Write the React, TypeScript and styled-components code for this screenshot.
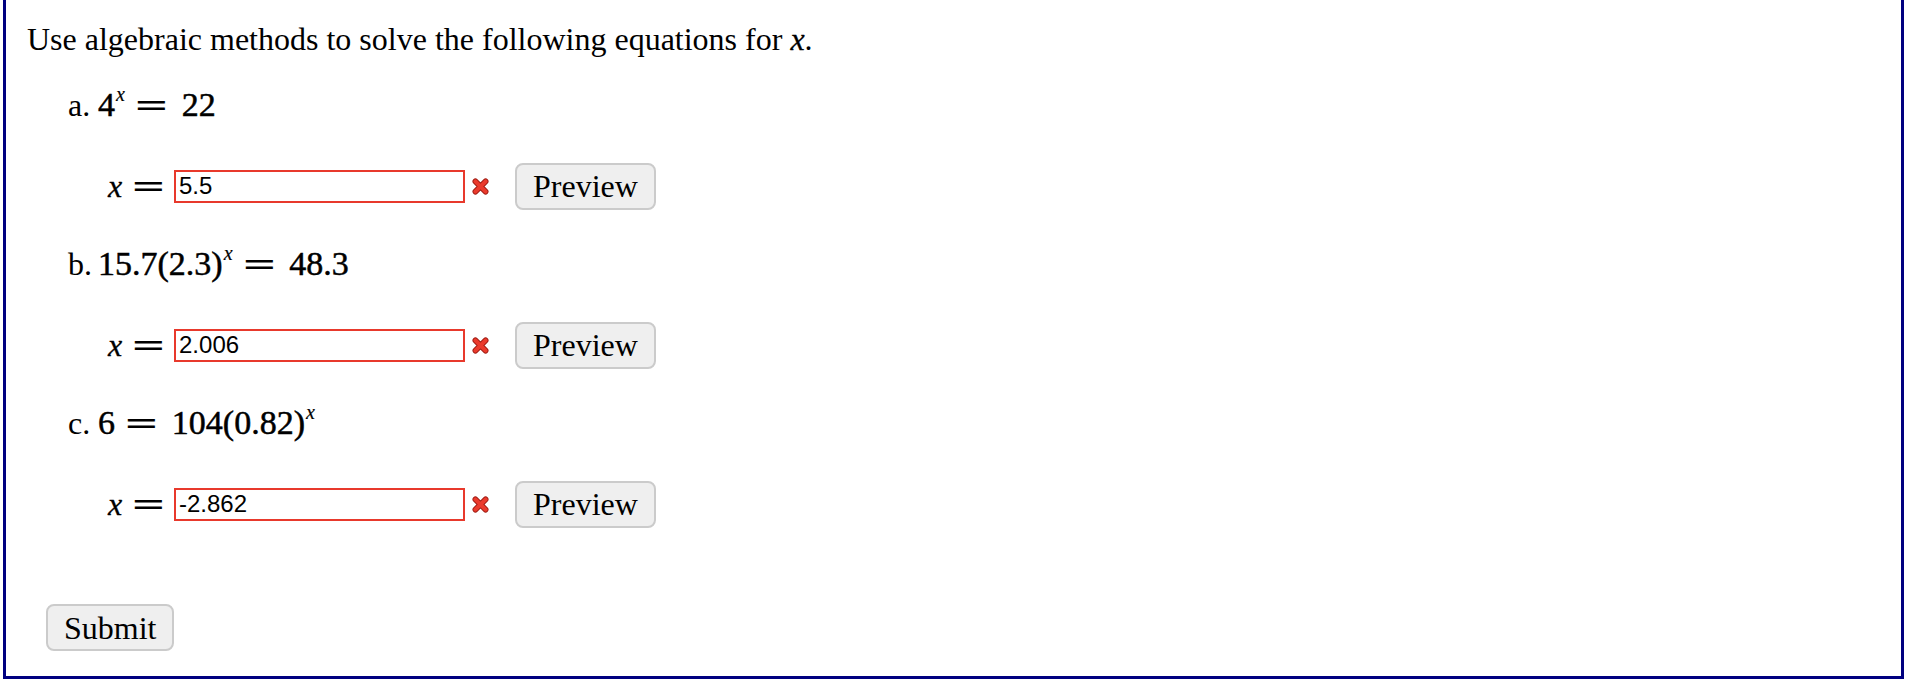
import React from "react";
import styled, { createGlobalStyle } from "styled-components";

const GlobalStyle = createGlobalStyle`
  html, body {
    margin: 0;
    padding: 0;
    background: #fff;
  }
  body {
    font-family: "Liberation Serif", "Times New Roman", serif;
    color: #000;
  }
`;

const problems = [
  { label: "a.", answer: "5.5", kind: "a" },
  { label: "b.", answer: "2.006", kind: "b" },
  { label: "c.", answer: "-2.862", kind: "c" },
];

const Frame = styled.div`
  margin: 0 2px 0 3px;
  height: 679px;
  box-sizing: border-box;
  border: 3px solid #000080;
  border-top: none;
  padding: 20px 0 0 21px;
  display: flex;
  flex-direction: column;
`;

const Intro = styled.p`
  margin: 0;
  font-size: 32px;
  line-height: 38px;
  height: 38px;
`;

const List = styled.div`
  margin-top: 27px;
  display: flex;
  flex-direction: column;
  gap: 34px;
`;

const Item = styled.div`
  display: flex;
  flex-direction: column;
  gap: 37px;
`;

const Title = styled.div`
  display: flex;
  align-items: baseline;
  height: 40px;
  line-height: 40px;
  padding-left: 41px;
  font-size: 32px;
  white-space: nowrap;
`;

const Label = styled.span`
  flex: none;
  width: 22px;
  margin-right: 8px;
`;

const Math = styled.span`
  font-family: "Liberation Serif", "Times New Roman", serif;
  font-size: 34px;
  -webkit-text-stroke: 0.5px #000;
`;

const Var = styled.i`
  font-family: "Liberation Serif", "Times New Roman", serif;
  font-style: italic;
  font-size: 32px;
  -webkit-text-stroke: 0.3px #000;
`;

const Sup = styled.sup`
  font-family: "Liberation Serif", "Times New Roman", serif;
  font-style: italic;
  font-size: 20px;
  vertical-align: 15px;
  line-height: 0;
  margin-left: 1px;
  -webkit-text-stroke: 0.2px #000;
`;

const Eq = styled.span<{ $l?: number; $r?: number }>`
  display: inline-block;
  font-family: "DejaVu Serif", serif;
  font-size: 32px;
  -webkit-text-stroke: 0;
  transform: scaleX(1.35);
  margin: 0 ${(p) => p.$r ?? 17}px 0 ${(p) => p.$l ?? 13}px;
`;

const Row = styled.div`
  display: flex;
  align-items: center;
  height: 48px;
  padding-left: 81px;
`;

const AnswerBox = styled.input`
  box-sizing: border-box;
  width: 291px;
  height: 33px;
  margin: 0;
  border: 2px solid #e8392c;
  padding: 0 3px;
  font-family: "Liberation Sans", Arial, sans-serif;
  font-size: 24px;
  color: #000;
  background: #fff;
  outline: none;
`;

const Mark = styled.svg`
  width: 17px;
  height: 17px;
  margin-left: 7px;
  flex: none;
`;

const Button = styled.button<{ $ml?: number }>`
  box-sizing: border-box;
  height: 47px;
  margin: 0 0 0 ${(p) => p.$ml ?? 0}px;
  padding: 0 16px;
  font-family: "Liberation Serif", "Times New Roman", serif;
  font-size: 32px;
  line-height: 1;
  color: #000;
  background: #efefef;
  border: 2px solid #cbcbcb;
  border-radius: 8px;
  cursor: pointer;
`;

const SubmitWrap = styled.div`
  margin-top: 76px;
  padding-left: 19px;
`;

const WrongMark = () => (
  <Mark viewBox="0 0 16 16">
    <path d="M3.2 3.2 L12.8 12.8 M12.8 3.2 L3.2 12.8" stroke="#9e1b12" strokeWidth="5.4" strokeLinecap="round" />
    <path d="M3.2 3.2 L12.8 12.8 M12.8 3.2 L3.2 12.8" stroke="#ea3a2c" strokeWidth="3.8" strokeLinecap="round" />
  </Mark>
);

const Equation = ({ kind }: { kind: string }) => {
  if (kind === "a")
    return (
      <Math>
        4<Sup>x</Sup>
        <Eq>=</Eq>22
      </Math>
    );
  if (kind === "b")
    return (
      <Math>
        15.7(2.3)<Sup>x</Sup>
        <Eq>=</Eq>48.3
      </Math>
    );
  return (
    <Math>
      6<Eq>=</Eq>104(0.82)<Sup>x</Sup>
    </Math>
  );
};

export default function App() {
  return (
    <>
      <GlobalStyle />
      <Frame>
        <Intro>
          Use algebraic methods to solve the following equations for <Var>x</Var>.
        </Intro>
        <List>
          {problems.map((p) => (
            <Item key={p.label}>
              <Title>
                <Label>{p.label}</Label>
                <Equation kind={p.kind} />
              </Title>
              <Row>
                <Var>x</Var>
                <Eq $l={13} $r={12}>=</Eq>
                <AnswerBox defaultValue={p.answer} />
                <WrongMark />
                <Button $ml={26}>Preview</Button>
              </Row>
            </Item>
          ))}
        </List>
        <SubmitWrap>
          <Button>Submit</Button>
        </SubmitWrap>
      </Frame>
    </>
  );
}
